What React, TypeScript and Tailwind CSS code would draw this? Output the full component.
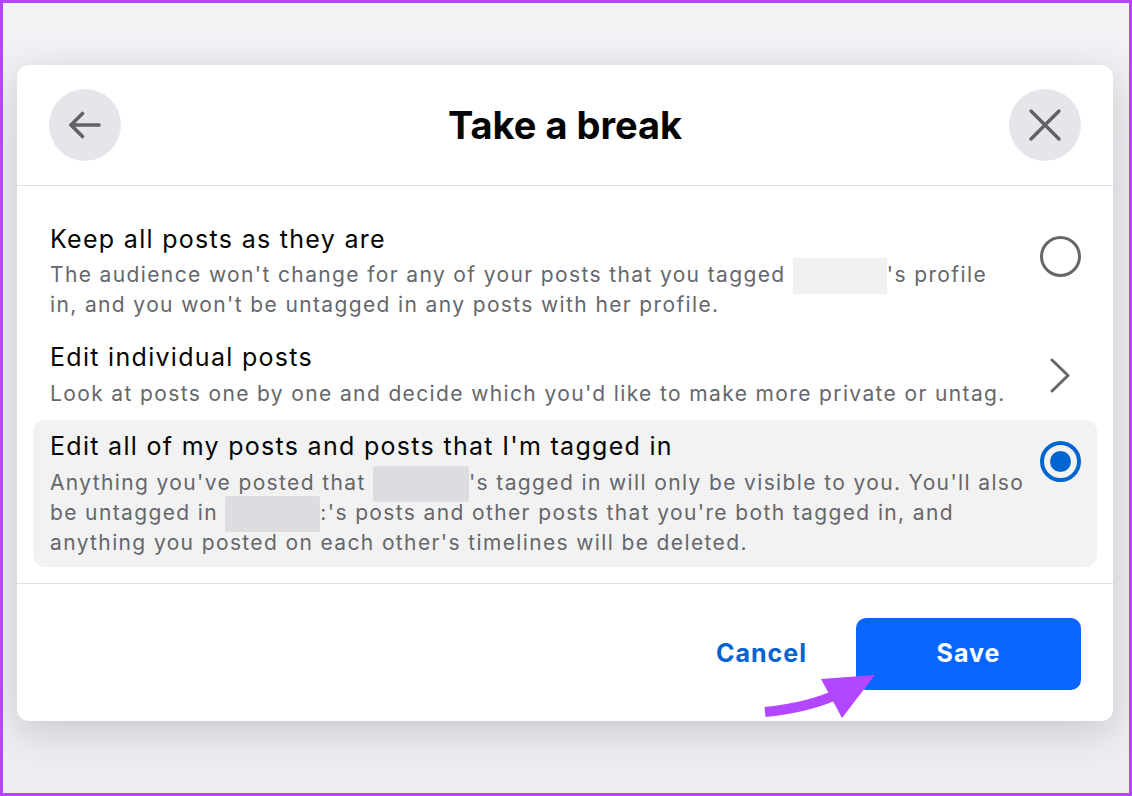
function Redacted({ w, tone }: { w: number; tone: string }) {
  return (
    <span
      className={`inline-block h-[36px] -my-[6px] align-middle rounded-[2px] ${tone}`}
      style={{ width: w }}
    />
  );
}

function Radio({ checked }: { checked?: boolean }) {
  if (checked) {
    return (
      <div className="w-[41px] h-[41px] rounded-full border-[4px] border-[#0064d1] flex items-center justify-center">
        <div className="w-[21px] h-[21px] rounded-full bg-[#0064d1]" />
      </div>
    );
  }
  return <div className="w-[41px] h-[41px] rounded-full border-[3px] border-[#65676b]" />;
}

const titleCls = "text-[25px] leading-[30px] tracking-[1.3px] text-[#050505]";
const descCls = "text-[21px] leading-[30px] tracking-[1.37px] text-[#65676b]";

export default function App() {
  return (
    <div className="relative w-[1132px] h-[796px] border-[3px] border-[#b347ff] bg-[linear-gradient(180deg,#f2f3f5_0%,#eceef1_20%,#eceef1_100%)] font-['Inter',sans-serif] overflow-hidden">
      <div className="ml-[14px] mt-[62px] w-[1096px] bg-white rounded-[12px] shadow-[0_10px_40px_rgba(0,0,0,0.16)]">
        {/* header */}
        <div className="h-[121px] px-[32px] flex items-center justify-between border-b border-[#dddfe3]">
          <button className="w-[72px] h-[72px] rounded-full bg-[#e4e6eb] flex items-center justify-center">
            <svg width="36" height="36" viewBox="0 0 36 36" fill="none" stroke="#606266" strokeWidth="3.6" strokeLinecap="round" strokeLinejoin="round">
              <path d="M4 18H32" />
              <path d="M15.5 6.5L4 18L15.5 29.5" />
            </svg>
          </button>
          <h1 className="text-[38px] font-bold text-[#050505]">Take a break</h1>
          <button className="w-[72px] h-[72px] rounded-full bg-[#e4e6eb] flex items-center justify-center">
            <svg width="36" height="36" viewBox="0 0 36 36" fill="none" stroke="#606266" strokeWidth="3.4" strokeLinecap="round">
              <path d="M4 4L32 32" />
              <path d="M32 4L4 32" />
            </svg>
          </button>
        </div>

        {/* options */}
        <div className="px-[16px] pt-[27px] pb-[16px] flex flex-col gap-[2px] border-b border-[#dddfe3]">
          <div className="flex items-start pl-[17px] pr-[16px] pt-[11px] pb-[9px] rounded-[12px]">
            <div className="flex-1 pr-[30px]">
              <div className={titleCls}>Keep all posts as they are</div>
              <div className={`mt-[6px] ${descCls}`}>
                The audience won't change for any of your posts that you tagged{" "}
                <Redacted w={94} tone="bg-[#f0f0f1]" />'s profile in, and you won't be untagged in any posts with her profile.
              </div>
            </div>
            <div className="mt-[12px]">
              <Radio />
            </div>
          </div>

          <div className="flex items-center pl-[17px] pr-[16px] pt-[11px] pb-[9px] rounded-[12px]">
            <div className="flex-1">
              <div className={titleCls}>Edit individual posts</div>
              <div className={`mt-[7px] ${descCls}`}>
                Look at posts one by one and decide which you'd like to make more private or untag.
              </div>
            </div>
            <div className="w-[41px] flex justify-center">
              <svg width="21" height="35" viewBox="0 0 21 35" fill="none" stroke="#65676b" strokeWidth="3" strokeLinecap="round" strokeLinejoin="round">
                <path d="M2 2L18 17.5L2 33" />
              </svg>
            </div>
          </div>

          <div className="flex items-start pl-[17px] pr-[16px] pt-[11px] pb-[9px] rounded-[12px] bg-[#f2f2f2]">
            <div className="flex-1 pr-[10px]">
              <div className={titleCls}>Edit all of my posts and posts that I'm tagged in</div>
              <div className={`mt-[7px] ${descCls}`}>
                Anything you've posted that <Redacted w={96} tone="bg-[#dcdde0]" />'s tagged in will only be visible to you. You'll also be untagged in{" "}
                <Redacted w={95} tone="bg-[#dcdde0]" />:'s posts and other posts that you're both tagged in, and anything you posted on each other's timelines will be deleted.
              </div>
            </div>
            <div className="mt-[10px]">
              <Radio checked />
            </div>
          </div>
        </div>

        {/* footer */}
        <div className="flex items-center justify-end gap-[49px] px-[32px] pt-[34px] pb-[31px]">
          <button className="text-[25px] font-bold tracking-[1px] text-[#0064d1]">Cancel</button>
          <button className="w-[225px] h-[72px] rounded-[10px] bg-[#0866ff] text-white text-[25px] font-bold tracking-[1px]">Save</button>
        </div>
      </div>

      {/* annotation arrow */}
      <svg className="absolute left-[-3px] top-[-3px] pointer-events-none" width="1132" height="796" viewBox="0 0 1132 796">
        <path d="M765 712 C 795 709, 820 703, 842 692" stroke="#b347ff" strokeWidth="10" fill="none" />
        <polygon points="821,679 875,675 842,718" fill="#b347ff" />
      </svg>
    </div>
  );
}
